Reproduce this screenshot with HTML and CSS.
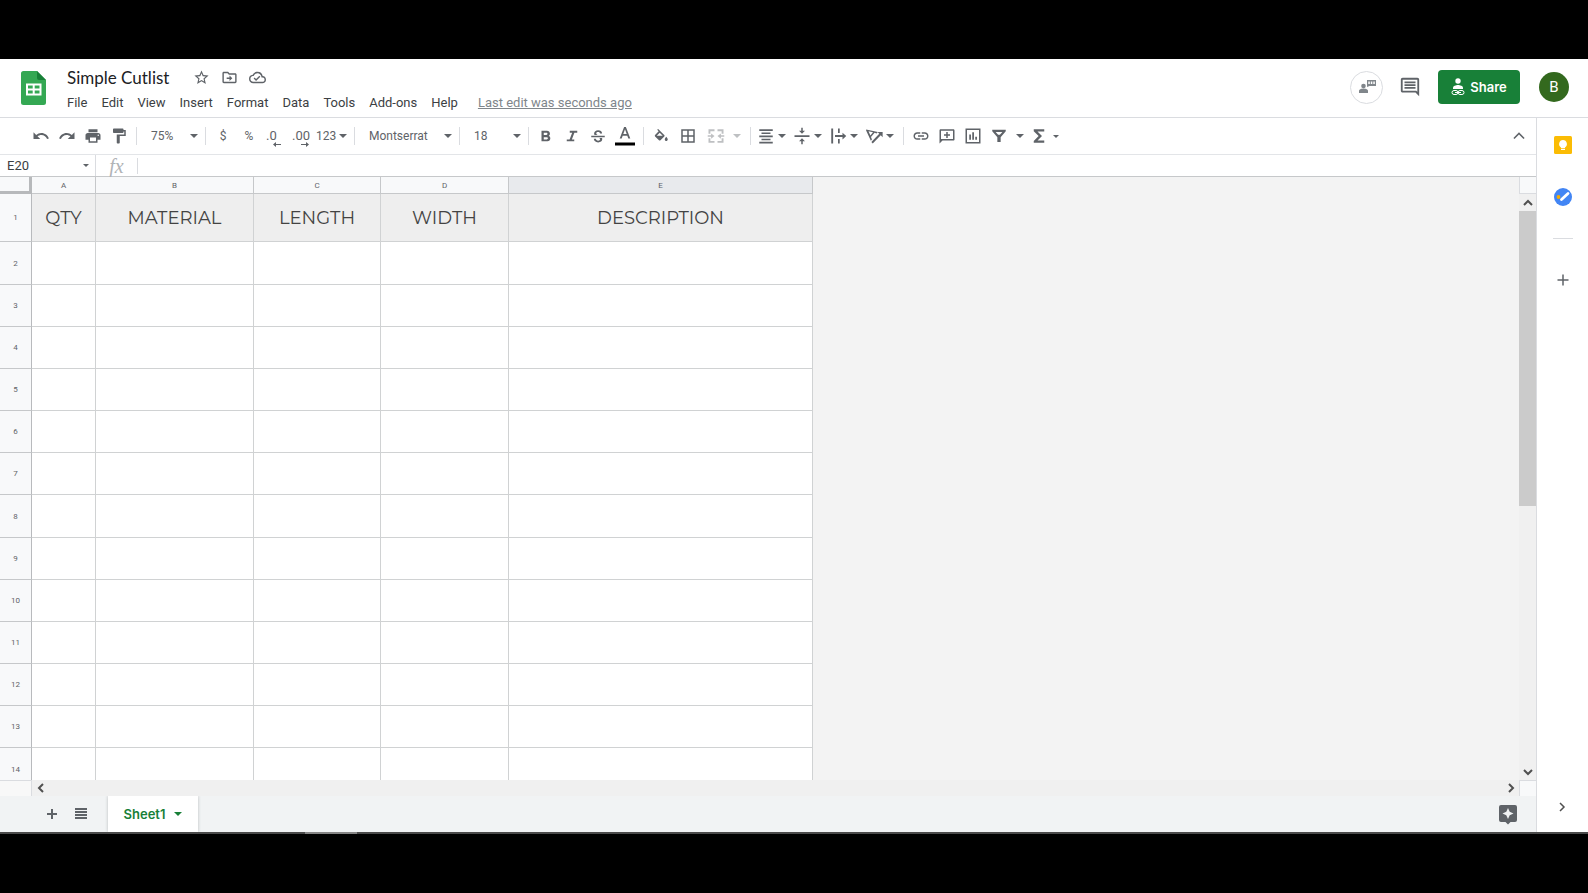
FILE: index.html
```html
<!DOCTYPE html>
<html lang="en">
<head>
<meta charset="utf-8">
<title>Simple Cutlist</title>
<link rel="stylesheet" href="styles.css">
</head>
<body>
<div class="app">
  <header class="header">
    <svg class="logo" width="25" height="34" viewBox="0 0 25 34" aria-hidden="true">
      <path d="M2.500 0H16L25 9v22.500a2.500 2.500 0 0 1-2.500 2.500h-20A2.500 2.500 0 0 1 0 31.500v-29A2.500 2.500 0 0 1 2.500 0z" fill="#34a853"/>
      <path d="M16 0l9 9h-7a2 2 0 0 1-2-2z" fill="#188038"/>
      <path fill-rule="evenodd" d="M5 12.500h15.500v12H5zM7 14.500v3h4.700v-3zM13.700 14.500v3h4.800v-3zM7 19.500v3h4.700v-3zM13.700 19.500v3h4.800v-3z" fill="#fff"/>
    </svg>
    <div class="heading">
      <div class="title-row">
        <h1 class="title">Simple Cutlist</h1>
        <button class="title-btn" aria-label="Star"><svg class="i16" viewBox="0 0 24 24"><path d="M22 9.240l-7.190-.620L12 2 9.190 8.630 2 9.240l5.460 4.730L5.820 21 12 17.270 18.180 21l-1.630-7.030L22 9.240zM12 15.400l-3.760 2.270 1-4.280-3.320-2.880 4.380-.380L12 6.100l1.710 4.040 4.380.380-3.320 2.880 1 4.280L12 15.400z"/></svg></button>
        <button class="title-btn" aria-label="Move"><svg class="i16" viewBox="0 0 24 24"><path d="M20 6h-8l-2-2H4c-1.100 0-2 .900-2 2v12c0 1.100.900 2 2 2h16c1.100 0 2-.900 2-2V8c0-1.100-.900-2-2-2zm0 12H4V6h5.200l2 2H20v10zM12 12H8v2h4v3l4-4-4-4z"/></svg></button>
        <button class="title-btn" aria-label="Saved to Drive"><svg class="i16" viewBox="0 0 24 24"><path d="M19.350 10.040A7.490 7.490 0 0 0 12 4C9.110 4 6.600 5.640 5.350 8.040A5.994 5.994 0 0 0 0 14c0 3.310 2.690 6 6 6h13c2.760 0 5-2.240 5-5 0-2.640-2.050-4.780-4.650-4.960zM19 18H6c-2.210 0-4-1.790-4-4 0-2.050 1.530-3.760 3.560-3.970l1.070-.110.500-.950A5.469 5.469 0 0 1 12 6c2.620 0 4.880 1.860 5.390 4.430l.300 1.500 1.530.110A2.980 2.980 0 0 1 22 15c0 1.650-1.350 3-3 3zm-9-3.820l-2.090-2.090L6.500 13.500 10 17l6.010-6.010-1.410-1.410z"/></svg></button>
      </div>
      <nav class="menus">
        <button>File</button><button>Edit</button><button>View</button><button>Insert</button><button>Format</button><button>Data</button><button>Tools</button><button>Add-ons</button><button>Help</button>
        <a class="last-edit" href="#">Last edit was seconds ago</a>
      </nav>
    </div>
    <div class="actions">
      <button class="present" aria-label="Present"><svg width="18" height="16" viewBox="0 0 18 16"><circle cx="5.500" cy="7" r="2.300"/><path d="M1 14v-2c0-1.600 3-2.400 4.500-2.400S10 10.400 10 12v2z"/><path fill-rule="evenodd" d="M9 1h9v6h-6.500L9 8zM10.300 2.500v2.500h1.500V2.500zM12.800 2.500v2.500h1.500V2.500zM15.300 2.500v2.500h1.500V2.500z"/></svg></button>
      <button class="comments" aria-label="Comments"><svg width="22" height="22" viewBox="0 0 24 24"><path d="M21.990 4c0-1.100-.890-2-1.990-2H4c-1.100 0-2 .900-2 2v12c0 1.100.900 2 2 2h14l4 4-.010-18zM20 4v13.170L18.830 16H4V4h16zM6 12h12v2H6zm0-3h12v2H6zm0-3h12v2H6z"/></svg></button>
      <button class="share"><svg width="14" height="18" viewBox="0 0 14 18"><circle cx="7" cy="3" r="2.700"/><path d="M2 11V9.800C2 7.800 5 6.900 7 6.900s5 .900 5 2.900V11z"/><g fill="none" stroke="#fff"><rect x="1" y="12.500" width="6" height="4" rx="2"/><rect x="7" y="12.500" width="6" height="4" rx="2"/><path d="M4 14.500h6"/></g></svg>Share</button>
      <button class="avatar">B</button>
    </div>
  </header>

  <div class="workspace">
    <main class="editor">
      <div class="toolbar" role="toolbar">
        <button class="tool" aria-label="Undo"><svg class="i18" viewBox="0 0 24 24"><path d="M12.500 8c-2.650 0-5.050.990-6.900 2.600L2 7v9h9l-3.620-3.620c1.390-1.160 3.160-1.880 5.120-1.880 3.540 0 6.550 2.310 7.600 5.500l2.370-.780C21.080 11.030 17.150 8 12.500 8z"/></svg></button>
        <button class="tool" aria-label="Redo"><svg class="i18" viewBox="0 0 24 24"><path d="M18.400 10.600C16.550 8.990 14.150 8 11.500 8c-4.650 0-8.580 3.030-9.960 7.220L3.900 16c1.050-3.190 4.050-5.500 7.600-5.500 1.950 0 3.730.720 5.120 1.880L13 16h9V7l-3.600 3.600z"/></svg></button>
        <button class="tool" aria-label="Print"><svg class="i18" viewBox="0 0 24 24"><path d="M19 8H5c-1.660 0-3 1.340-3 3v6h4v4h12v-4h4v-6c0-1.660-1.340-3-3-3zm-3 11H8v-5h8v5zm3-7c-.550 0-1-.450-1-1s.450-1 1-1 1 .450 1 1-.450 1-1 1zm-1-9H6v4h12V3z"/></svg></button>
        <button class="tool" aria-label="Paint format"><svg class="i18" viewBox="0 0 24 24"><path d="M18 4V3c0-.550-.450-1-1-1H5c-.550 0-1 .450-1 1v4c0 .550.450 1 1 1h12c.550 0 1-.450 1-1V6h1v4H9v11c0 .550.450 1 1 1h2c.550 0 1-.450 1-1v-9h8V4h-3z"/></svg></button>
        <span class="sep"></span>
        <span class="pick"><select aria-label="Zoom"><option>75%</option></select></span>
        <span class="sep"></span>
        <button class="tool">$</button>
        <button class="tool">%</button>
        <button class="tool dec" aria-label="Decrease decimal places">.0<svg width="8" height="5" viewBox="0 0 8 5"><path d="M3 0v2h5v1H3v2L0 2.500z"/></svg></button>
        <button class="tool dec two" aria-label="Increase decimal places">.00<svg width="8" height="5" viewBox="0 0 8 5"><path d="M5 0v2H0v1h5v2l3-2.500z"/></svg></button>
        <button class="tool drop">123<i class="caret"></i></button>
        <span class="sep"></span>
        <span class="pick wide"><select aria-label="Font"><option>Montserrat</option></select></span>
        <span class="sep"></span>
        <span class="pick"><select aria-label="Font size"><option>18</option></select></span>
        <span class="sep"></span>
        <button class="tool" aria-label="Bold"><svg class="i18" viewBox="0 0 24 24"><path d="M15.600 11.790c.970-.670 1.650-1.770 1.650-2.790 0-2.260-1.750-4-4-4H6v14h8.040c2.090 0 3.710-1.700 3.710-3.790 0-1.520-.860-2.820-2.150-3.420zM9 7.500h3.500c.830 0 1.500.670 1.500 1.500s-.670 1.500-1.500 1.500H9v-3zm4 9H9v-3h4c.830 0 1.500.670 1.500 1.500s-.670 1.500-1.500 1.500z"/></svg></button>
        <button class="tool" aria-label="Italic"><svg class="i18" viewBox="0 0 24 24"><path d="M9 5v2.500h3.200L8.800 16.500H5V19h10v-2.500h-3.200l3.400-9H19V5z"/></svg></button>
        <button class="tool" aria-label="Strikethrough"><svg class="i18" viewBox="0 0 24 24"><path d="M3 11.500h18v2H3zM6.800 9c0-3 2.300-4.700 5.400-4.700 3 0 5.100 1.600 5.300 4.300h-2.800c-.100-1.300-1-2-2.500-2s-2.500.700-2.500 1.900c0 .900.700 1.500 2 2H7.400c-.400-.400-.600-.900-.600-1.500zM13.500 14.500h3.800c.300.500.400 1 .400 1.600 0 2.800-2.300 4.400-5.500 4.400-3.400 0-5.700-1.700-5.800-4.700h2.800c.100 1.600 1.200 2.400 3 2.400 1.600 0 2.600-.700 2.600-1.900 0-.800-.400-1.300-1.300-1.800z"/></svg></button>
        <button class="tool mid" aria-label="Text color"><svg width="20" height="20" viewBox="0 0 20 20"><path d="M9.100 1L4.700 12.500h2l1-2.800h4.600l1 2.800h2L10.900 1zm-.800 7L10 3.300 11.700 8z"/><path d="M0 16.500h20v3H0z" fill="#000"/></svg></button>
        <span class="sep"></span>
        <button class="tool" aria-label="Fill color"><svg class="i18" viewBox="0 0 24 24"><path d="M15.600 9.900L8.200 2.500 6.900 3.800l2 2-4.800 4.800c-.600.600-.600 1.400 0 2l5.200 5.100c.600.600 1.400.600 2 0l5.100-5.100c.600-.600.600-1.800-.800-2.700zM6.300 11.500l4-4 4 4zM19 13s-2 2.200-2 3.500c0 1.100.900 2 2 2s2-.900 2-2C21 15.200 19 13 19 13z"/></svg></button>
        <button class="tool mid" aria-label="Borders"><svg class="i18" viewBox="0 0 24 24"><path d="M3 3v18h18V3H3zm8 16H5v-6h6v6zm0-8H5V5h6v6zm8 8h-6v-6h6v6zm0-8h-6V5h6v6z"/></svg></button>
        <button class="tool merge" aria-label="Merge cells" disabled><svg width="18" height="18" viewBox="0 0 24 24"><path d="M2 3h8v2.500H4.500V9H2zM14 3h8v6h-2.500V5.500H14zM2 15h2.500v3.500H10V21H2zM19.500 15H22v6h-8v-2.500h5.500zM1 11h4.500V8.500L10 12l-4.500 3.500V13H1zM23 11h-4.500V8.500L14 12l4.500 3.500V13H23z"/></svg><i class="caret"></i></button>
        <span class="sep"></span>
        <button class="tool drop" aria-label="Horizontal align"><svg class="i18" viewBox="0 0 24 24"><path d="M3 3h18v2.200H3zM6 7.200h12v2.200H6zM3 11.400h18v2.200H3zM6 15.600h12v2.200H6zM3 19.800h18V22H3z"/></svg><i class="caret"></i></button>
        <button class="tool drop" aria-label="Vertical align"><svg class="i18" viewBox="0 0 24 24"><path d="M8 19h3v4h2v-4h3l-4-4-4 4zm8-14h-3V1h-2v4H8l4 4 4-4zM2 11v2.300h20V11H2z"/></svg><i class="caret"></i></button>
        <button class="tool drop" aria-label="Text wrapping"><svg class="i18" viewBox="0 0 24 24"><path d="M3 2h2.500v20H3zM8 10.800h10V7.500l5 4.500-5 4.500v-3.300H8zM12 2h2.300v6H12zM12 16h2.300v6H12z"/></svg><i class="caret"></i></button>
        <button class="tool drop" aria-label="Text rotation"><svg class="i18" viewBox="0 0 24 24"><path fill-rule="evenodd" d="M1.500 3.200L17 6.800l-1.500 1.700-2.700-.700L8 13.300l1.300 3.200-1.500 1.700L1.500 4.800zM4.700 5.500l2.500 5.700 3.500-4.100zM8.500 20L19 9l-2.300-2.300H23.500V13.500L21 11 10.300 22z"/></svg><i class="caret"></i></button>
        <span class="sep"></span>
        <button class="tool" aria-label="Insert link"><svg class="i18" viewBox="0 0 24 24"><path d="M3.900 12c0-1.710 1.390-3.100 3.100-3.100h4V7H7c-2.760 0-5 2.240-5 5s2.240 5 5 5h4v-1.900H7c-1.710 0-3.100-1.390-3.100-3.100zM8 13h8v-2H8v2zm9-6h-4v1.900h4c1.710 0 3.100 1.390 3.100 3.100s-1.390 3.100-3.100 3.100h-4V17h4c2.760 0 5-2.240 5-5s-2.240-5-5-5z"/></svg></button>
        <button class="tool" aria-label="Insert comment"><svg class="i18" viewBox="0 0 24 24"><path d="M20.500 3h-17C2.700 3 2 3.700 2 4.500V22l4-4h14.500c.800 0 1.500-.700 1.500-1.500v-12c0-.800-.700-1.500-1.500-1.500zM20 16H4V5h16zM11 6.500h2v3h3v2h-3v3h-2v-3H8v-2h3z"/></svg></button>
        <button class="tool" aria-label="Insert chart"><svg class="i18" viewBox="0 0 24 24"><path d="M2 2v20h20V2zm18 18H4V4h16zM7 10h2.300v7H7zM11 7h2.300v10H11zM15 13h2.300v4H15z"/></svg></button>
        <button class="tool spaced" aria-label="Filter"><svg class="i18" viewBox="0 0 24 24"><path fill-rule="evenodd" d="M3 3.500h18v2.300L14.200 13.500V20H9.800v-6.500L3 5.800zM7.500 6.500l3.300 3.800h2.400l3.300-3.800z"/></svg><i class="caret"></i></button>
        <button class="tool spaced sum" aria-label="Functions"><svg class="i18" viewBox="0 0 24 24"><path d="M19 3H5v2.500l6.500 6.500L5 18.500V21h14v-3H10l6-6-6-6h9z"/></svg><i class="caret small"></i></button>
        <button class="tool collapse" aria-label="Hide menus"><svg class="i18" viewBox="0 0 24 24"><path d="M12 7l-7.500 7.500L6 16l6-6 6 6 1.500-1.500z"/></svg></button>
      </div>

      <div class="formula">
        <label class="namebox"><input aria-label="Name box" value="E20"><i class="caret small"></i></label>
        <label class="fx" for="fx">fx</label>
        <input id="fx" class="fx-input">
      </div>

      <div class="grid-area">
        <div class="sheet">
          <table class="cells">
            <colgroup><col class="c-num"><col class="c-a"><col class="c-b"><col class="c-c"><col class="c-d"><col class="c-e"></colgroup>
            <thead><tr><th class="corner"></th><th>A</th><th>B</th><th>C</th><th>D</th><th class="active">E</th></tr></thead>
            <tbody>
              <tr class="labels"><th>1</th><td>QTY</td><td>MATERIAL</td><td>LENGTH</td><td>WIDTH</td><td>DESCRIPTION</td></tr>
              <tr><th>2</th><td></td><td></td><td></td><td></td><td></td></tr>
              <tr><th>3</th><td></td><td></td><td></td><td></td><td></td></tr>
              <tr><th>4</th><td></td><td></td><td></td><td></td><td></td></tr>
              <tr><th>5</th><td></td><td></td><td></td><td></td><td></td></tr>
              <tr><th>6</th><td></td><td></td><td></td><td></td><td></td></tr>
              <tr><th>7</th><td></td><td></td><td></td><td></td><td></td></tr>
              <tr><th>8</th><td></td><td></td><td></td><td></td><td></td></tr>
              <tr><th>9</th><td></td><td></td><td></td><td></td><td></td></tr>
              <tr><th>10</th><td></td><td></td><td></td><td></td><td></td></tr>
              <tr><th>11</th><td></td><td></td><td></td><td></td><td></td></tr>
              <tr><th>12</th><td></td><td></td><td></td><td></td><td></td></tr>
              <tr><th>13</th><td></td><td></td><td></td><td></td><td></td></tr>
              <tr><th>14</th><td></td><td></td><td></td><td></td><td></td></tr>
            </tbody>
          </table>
        </div>
        <div class="vscroll">
          <div class="vhead"></div>
          <button aria-label="Scroll up"><svg width="12" height="12" viewBox="0 0 12 12"><path class="arrow" d="M2 8l4-4 4 4"/></svg></button>
          <div class="track"><div class="thumb"></div></div>
          <button aria-label="Scroll down"><svg width="12" height="12" viewBox="0 0 12 12"><path class="arrow" d="M2 4l4 4 4-4"/></svg></button>
        </div>
        <div class="hscroll">
          <div class="hhead"></div>
          <button aria-label="Scroll left"><svg width="12" height="12" viewBox="0 0 12 12"><path class="arrow" d="M8 2L4 6l4 4"/></svg></button>
          <button class="right" aria-label="Scroll right"><svg width="12" height="12" viewBox="0 0 12 12"><path class="arrow" d="M4 2l4 4-4 4"/></svg></button>
        </div>
        <div class="scroll-corner"></div>
      </div>

      <footer class="tabs">
        <button class="tab-btn" aria-label="Add sheet"><svg width="12" height="12" viewBox="0 0 12 12"><path d="M5 1h2v4h4v2H7v4H5V7H1V5h4z"/></svg></button>
        <button class="tab-btn" aria-label="All sheets"><svg width="12" height="12" viewBox="0 0 12 12"><path d="M0 0h12v2H0zM0 3h12v2H0zM0 6h12v2H0zM0 9h12v2H0z"/></svg></button>
        <button class="tab">Sheet1<i class="caret"></i></button>
        <button class="explore" aria-label="Explore"><svg width="18" height="20" viewBox="0 0 18 20"><path fill-rule="evenodd" d="M2 0h14a2 2 0 0 1 2 2v13a2 2 0 0 1-2 2h-4.500L9 19.500 6.500 17H2a2 2 0 0 1-2-2V2a2 2 0 0 1 2-2zM9 3L7.300 6.800 3.500 8.500l3.800 1.700L9 14l1.700-3.800 3.800-1.700-3.800-1.700z"/></svg></button>
      </footer>
    </main>

    <aside class="side">
      <button aria-label="Keep"><svg width="18" height="18" viewBox="0 0 18 18"><rect width="18" height="18" rx="1.500" fill="#fbbc04"/><path d="M9 4a4 4 0 0 0-2 7.400V12h4v-.600A4 4 0 0 0 9 4zM7 12.800h4V14H7z" fill="#fff"/></svg></button>
      <button aria-label="Tasks"><svg width="18" height="18" viewBox="0 0 18 18"><circle cx="9" cy="9" r="9" fill="#4285f4"/><circle cx="4.500" cy="9" r="1.900" fill="#f6ad01"/><path d="M7.500 11.500l6.500-6" stroke="#fff" stroke-width="2.800" stroke-linecap="round"/></svg></button>
      <hr>
      <button aria-label="Get add-ons"><svg width="12" height="12" viewBox="0 0 12 12"><path d="M5.250.500h1.500v4.750h4.750v1.500H6.750v4.750h-1.500V6.750H.500v-1.500h4.750z"/></svg></button>
      <button class="hide" aria-label="Hide side panel"><svg width="12" height="12" viewBox="0 0 12 12"><path class="arrow thin" d="M3 2l4 4-4 4"/></svg></button>
    </aside>
  </div>
  <div class="progress"><div class="progress-mark"></div></div>
</div>
</body>
</html>
```
FILE: styles.css
```css
* { box-sizing: border-box; }

body {
  margin: 0;
  height: 100vh;
  padding: 59px 0;
  background: #000;
  color: #3c4043;
  font-family: Roboto, "Liberation Sans", sans-serif;
  font-size: 13px;
}

button, input, select {
  margin: 0;
  padding: 0;
  border: 0;
  background: none;
  color: inherit;
  font: inherit;
}

button { display: flex; align-items: center; justify-content: center; }
svg { display: block; flex: none; fill: #5f6368; }
.i16 { width: 17px; height: 17px; }
.i18 { width: 18px; height: 18px; }
.arrow { fill: none; stroke: #505050; stroke-width: 2; }
.arrow.thin { stroke-width: 1.5; }

.app { height: 100%; display: flex; flex-direction: column; background: #fff; }

/* Header */
.header {
  height: 59px;
  flex: none;
  display: flex;
  align-items: flex-start;
  padding: 0 19px 0 21px;
  border-bottom: 1px solid #dadce0;
}
.logo { margin: 12px 21px 0 0; }
.heading { flex: 1; padding-top: 7px; }
.title-row { display: flex; align-items: center; height: 24px; }
.title {
  margin: 0 18px 0 0;
  color: #202124;
  font: 400 17px/24px "Google Sans", Lato, sans-serif;
}
.title-btn { width: 28px; height: 22px; align-self: flex-start; }
.menus { display: flex; gap: 14px; height: 24px; align-items: center; }
.last-edit { margin-left: 6px; color: #80868b; }
.actions { display: flex; align-items: center; padding-top: 11px; }
.present {
  width: 33px;
  height: 33px;
  margin-right: 16px;
  border: 1px solid #dadce0;
  border-radius: 50%;
}
.present svg { fill: #80868b; }
.comments { width: 22px; margin-right: 17px; }
.share {
  width: 82px;
  height: 34px;
  gap: 5px;
  margin-right: 19px;
  border-radius: 4px;
  background: #188038;
  color: #fff;
  font: 600 13px "Google Sans", Inter, sans-serif;
}
.share svg { fill: #fff; }
.avatar {
  width: 30px;
  height: 30px;
  border-radius: 50%;
  background: #33691e;
  color: #fff;
  font-size: 15px;
}

/* Main columns */
.workspace { flex: 1; min-height: 0; display: flex; }
.editor { flex: 1; min-width: 0; display: flex; flex-direction: column; }

/* Toolbar */
.toolbar {
  height: 37px;
  flex: none;
  display: flex;
  align-items: center;
  padding: 0 4px 0 28px;
  border-bottom: 1px solid #e3e5e8;
  color: #5f6368;
  font-size: 12px;
}
.tool { width: 26px; height: 26px; flex: none; }
.tool.mid { width: 28px; }
.tool.drop { width: 36px; justify-content: flex-start; gap: 3px; padding-left: 2px; }
.tool.merge { width: 44px; gap: 8px; opacity: 0.4; }
.tool.spaced { width: 40px; gap: 8px; justify-content: flex-start; padding-left: 4px; }
.tool.sum { gap: 5px; }
.tool.dec { flex-direction: column; align-items: flex-start; padding: 4px 0 0 4px; font-size: 13px; line-height: 13px; }
.tool.dec svg { margin-left: 7px; }
.tool.two svg { margin-left: 9px; }
.tool.collapse { margin-left: auto; }
.sep { width: 1px; height: 18px; flex: none; margin: 0 4px; background: #dadce0; }
.caret {
  flex: none;
  border: 4px solid transparent;
  border-top-color: #5f6368;
  border-bottom: 0;
}
.caret.small { border-width: 3px 3px 0; }
.pick { width: 60px; flex: none; display: grid; align-items: center; }
.pick.wide { width: 96px; }
.pick select { appearance: none; grid-area: 1 / 1; width: 100%; padding-left: 10px; }
.pick::after {
  content: "";
  grid-area: 1 / 1;
  justify-self: end;
  margin-right: 3px;
  border: 4px solid transparent;
  border-top-color: #5f6368;
  border-bottom: 0;
  pointer-events: none;
}

/* Formula bar */
.formula {
  height: 22px;
  flex: none;
  display: flex;
  align-items: center;
  border-bottom: 1px solid #c6c8ca;
}
.namebox {
  width: 96px;
  height: 100%;
  display: flex;
  align-items: center;
  padding: 0 6px 0 7px;
  border-right: 1px solid #dadce0;
}
.namebox input { flex: 1; min-width: 0; }
.fx {
  width: 42px;
  border-right: 1px solid #dadce0;
  color: #b0b3b6;
  font: italic 20px/16px "Liberation Serif", serif;
  text-align: center;
}
.fx-input { flex: 1; padding-left: 6px; }

/* Grid */
.grid-area {
  flex: 1;
  min-height: 0;
  display: grid;
  grid-template: minmax(0, 1fr) 16px / minmax(0, 1fr) 17px;
  background: #f3f3f3;
}
.sheet { overflow: hidden; }
.cells { width: 813px; table-layout: fixed; border-collapse: separate; border-spacing: 0; background: #fff; }
.c-num { width: 32px; }
.c-a { width: 64px; }
.c-b { width: 158px; }
.c-c { width: 127px; }
.c-d { width: 128px; }
.c-e { width: 304px; }
.cells th, .cells td {
  height: 42px;
  padding: 0;
  border: solid #d0d2d3;
  border-width: 0 1px 1px 0;
  text-align: center;
}
.cells th { background: #f8f9fa; color: #5f6368; font-size: 8px; font-weight: 400; border-color: #c6c8ca; }
.cells tbody th { border-right-color: #b8babd; }
.cells thead th { height: 17px; }
.cells thead .active { background: #e8eaed; }
.cells thead .corner { border-right: 3px solid #b7b9bb; border-bottom: 3px solid #b7b9bb; }
.cells tbody tr:nth-child(6n + 2) > * { height: 43px; }
.cells tbody .labels > * { height: 48px; }
.labels td {
  background: #eee;
  color: #434343;
  font: 400 18px Montserrat, Inter, sans-serif;
}

.vscroll { display: flex; flex-direction: column; background: #f0f0f0; }
.vscroll button { height: 17px; }
.vhead { height: 17px; background: #f8f9fa; border: solid #dadce0; border-width: 0 0 1px 1px; }
.track { flex: 1; }
.thumb { height: 53.5%; background: #cbcbcb; }
.hscroll { display: flex; background: #f0f0f0; }
.hscroll button { width: 17px; }
.hscroll .right { margin-left: auto; }
.hhead { width: 32px; background: #f8f8f8; border: solid #dadce0; border-width: 1px 1px 0 0; }
.scroll-corner { background: #f8f9fa; border: solid #dadce0; border-width: 1px 0 0 1px; }

/* Sheet tabs */
.tabs {
  height: 36px;
  flex: none;
  display: flex;
  align-items: center;
  padding: 0 19px 0 38px;
  background: #f1f3f4;
}
.tab-btn { width: 28px; height: 28px; }
.tab-btn + .tab-btn { width: 30px; }
.tab {
  width: 90px;
  height: 100%;
  gap: 9px;
  margin-left: 12px;
  background: #fff;
  box-shadow: 0 0 3px rgba(60, 64, 67, 0.3);
  clip-path: inset(0 -3px);
  color: #188038;
  font: 600 13px "Google Sans", Inter, sans-serif;
}
.tab .caret { border-top-color: #188038; }
.explore { margin-left: auto; padding-top: 2px; }

/* Side panel */
.side {
  width: 52px;
  flex: none;
  display: flex;
  flex-direction: column;
  align-items: center;
  padding: 10px 0 8px;
  border-left: 1px solid #dadce0;
}
.side button { width: 34px; height: 34px; margin-bottom: 18px; }
.side hr { width: 20px; margin: 6px 0 24px; border: 0; border-top: 1px solid #dadce0; }
.side .hide { margin: auto 0 0; }

.progress { height: 2px; flex: none; background: #4a4a4a; }
.progress-mark { width: 52px; height: 100%; margin-left: 305px; background: #858585; }
```
